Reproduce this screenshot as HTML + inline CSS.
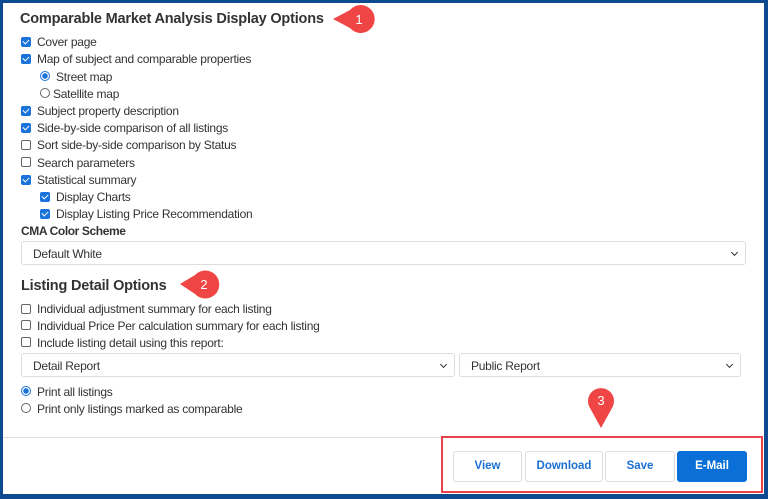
<!DOCTYPE html>
<html><head><style>
*{box-sizing:border-box;margin:0;padding:0}
body{width:768px;height:499px;background:#0d4a8f;font-family:"Liberation Sans",sans-serif;position:relative;overflow:hidden;color:#333}
#p{position:absolute;left:3px;top:3px;width:761px;height:491px;background:#fff}
.t{position:absolute;font-size:12px;letter-spacing:-0.25px;color:#333;white-space:nowrap;line-height:14px}
.cb{position:absolute;width:10px;height:10px;border-radius:2px}
.on{background:#1a73d9}
.on::after{content:"";position:absolute;left:3px;top:1px;width:3px;height:5px;border:solid #fff;border-width:0 1.6px 1.6px 0;transform:rotate(45deg)}
.off{border:1px solid #666;background:#fff}
.rd{position:absolute;width:10px;height:10px;border-radius:50%;border:1px solid #666;background:#fff}
.rd.sel{border:1px solid #1a73d9;background:radial-gradient(circle,#1a73d9 0 2.5px,#fff 3px)}
h2{position:absolute;font-size:14.5px;font-weight:bold;color:#333;letter-spacing:-0.2px;white-space:nowrap}
.sel-b{position:absolute;border:1px solid #ddd;border-radius:3px;height:24px;font-size:12px;letter-spacing:-0.25px;padding:5px 0 0 11px;color:#333}
.sel-b::after{content:"";position:absolute;right:8px;top:8px;width:4px;height:4px;border:solid #333;border-width:0 1.5px 1.5px 0;transform:rotate(45deg)}
.btn{position:absolute;top:451px;height:31px;border:1px solid #ddd;border-radius:3px;color:#1a6fd0;font-weight:bold;font-size:11.5px;text-align:center;line-height:29px}
</style></head><body>
<div id="p"></div>
<h2 style="left:20px;top:11px">Comparable Market Analysis Display Options</h2>
<svg style="position:absolute;left:330px;top:4px" width="50" height="32"><path d="M3 15 L20 6 A14 14 0 1 1 20 24 Z" fill="#f04545"/><text x="29" y="20" font-size="13" fill="#fff" text-anchor="middle" font-family="Liberation Sans">1</text></svg>

<div class="cb on" style="left:21px;top:37px"></div><div class="t" style="left:37px;top:35px">Cover page</div>
<div class="cb on" style="left:21px;top:54px"></div><div class="t" style="left:37px;top:52px">Map of subject and comparable properties</div>
<div class="rd sel" style="left:40px;top:71px"></div><div class="t" style="left:56px;top:70px">Street map</div>
<div class="rd" style="left:40px;top:88px"></div><div class="t" style="left:53px;top:87px">Satellite map</div>
<div class="cb on" style="left:21px;top:106px"></div><div class="t" style="left:37px;top:104px">Subject property description</div>
<div class="cb on" style="left:21px;top:123px"></div><div class="t" style="left:37px;top:121px">Side-by-side comparison of all listings</div>
<div class="cb off" style="left:21px;top:140px"></div><div class="t" style="left:37px;top:138px">Sort side-by-side comparison by Status</div>
<div class="cb off" style="left:21px;top:157px"></div><div class="t" style="left:37px;top:156px">Search parameters</div>
<div class="cb on" style="left:21px;top:175px"></div><div class="t" style="left:37px;top:173px">Statistical summary</div>
<div class="cb on" style="left:40px;top:192px"></div><div class="t" style="left:56px;top:190px">Display Charts</div>
<div class="cb on" style="left:40px;top:209px"></div><div class="t" style="left:56px;top:207px">Display Listing Price Recommendation</div>
<div class="t" style="left:21px;top:224px;font-weight:bold;letter-spacing:-0.4px">CMA Color Scheme</div>
<div class="sel-b" style="left:21px;top:241px;width:725px">Default White</div>

<h2 style="left:21px;top:278px">Listing Detail Options</h2>
<svg style="position:absolute;left:177px;top:270px" width="50" height="32"><path d="M3 14 L18 5 A14 14 0 1 1 18 24 Z" fill="#f04545"/><text x="27" y="19" font-size="13" fill="#fff" text-anchor="middle" font-family="Liberation Sans">2</text></svg>
<div class="cb off" style="left:21px;top:304px"></div><div class="t" style="left:37px;top:302px">Individual adjustment summary for each listing</div>
<div class="cb off" style="left:21px;top:320px"></div><div class="t" style="left:37px;top:319px">Individual Price Per calculation summary for each listing</div>
<div class="cb off" style="left:21px;top:337px"></div><div class="t" style="left:37px;top:336px">Include listing detail using this report:</div>
<div class="sel-b" style="left:21px;top:353px;width:434px">Detail Report</div>
<div class="sel-b" style="left:459px;top:353px;width:282px">Public Report</div>
<div class="rd sel" style="left:21px;top:386px"></div><div class="t" style="left:37px;top:385px">Print all listings</div>
<div class="rd" style="left:21px;top:403px"></div><div class="t" style="left:37px;top:402px">Print only listings marked as comparable</div>

<svg style="position:absolute;left:585px;top:384px" width="32" height="46"><path d="M16 44 L5 24 A13 13 0 1 1 27 24 Z" fill="#f04545"/><text x="16" y="21" font-size="13" fill="#fff" text-anchor="middle" font-family="Liberation Sans">3</text></svg>
<div style="position:absolute;left:3px;top:437px;width:440px;height:1px;background:#ddd"></div>
<div style="position:absolute;left:441px;top:436px;width:322px;height:57px;border:2px solid #e8434a"></div>
<div class="btn" style="left:453px;width:69px">View</div>
<div class="btn" style="left:525px;width:78px">Download</div>
<div class="btn" style="left:605px;width:70px">Save</div>
<div class="btn" style="left:677px;width:70px;background:#0a6fd6;border-color:#0a6fd6;color:#fff">E-Mail</div>
</body></html>
